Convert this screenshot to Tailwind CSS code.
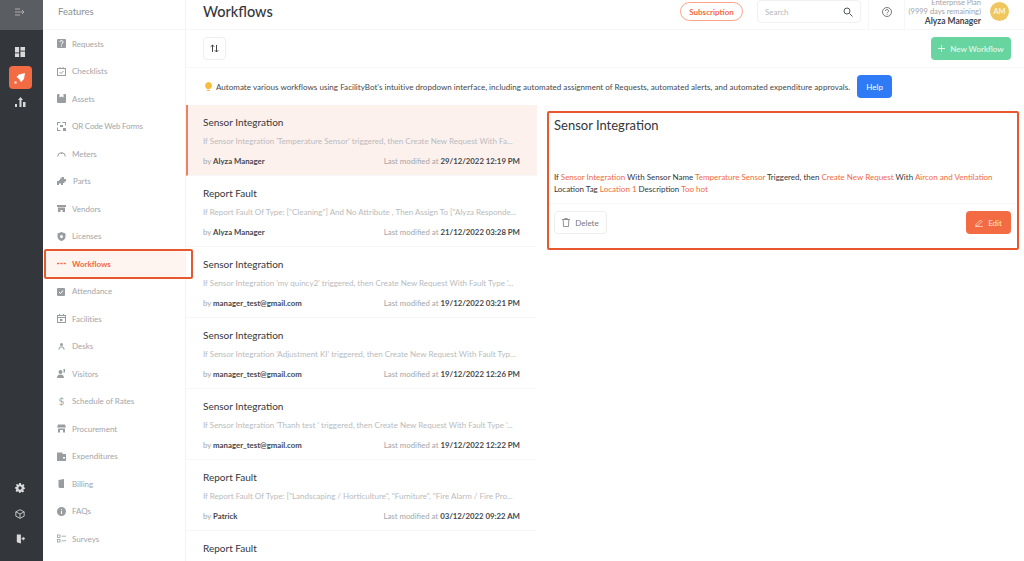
<!doctype html>
<html><head><meta charset="utf-8"><script src="https://cdn.jsdelivr.net/npm/@tailwindcss/browser@4"></script></head>
<body class="m-0">
<div class="relative flex w-[1024px] h-[561px] overflow-hidden bg-white font-['Lato','Noto_Sans',sans-serif] text-[#33373c]">
  <aside class="w-[43px] shrink-0 bg-[#33373c] flex flex-col items-center text-[#d9dadb]">
    <div class="w-full h-[30px] bg-[#5a5d61] flex items-center justify-center pb-[6px] pr-[3px]">
      <svg width="10" height="8" viewBox="0 0 10 8" fill="none" stroke="#a9abad" stroke-width="1"><path d="M0 1h5M0 4h8M0 7h5M7 2l2 2-2 2"/></svg>
    </div>
    <div class="mt-[11px] mr-[3px] h-[22px] flex items-center"><svg width="10" height="10" viewBox="0 0 11 11" fill="#d9dadb"><rect width="4.500" height="6"/><rect x="6" width="5" height="4"/><rect y="7" width="4.500" height="4"/><rect x="6" y="5" width="5" height="6"/></svg></div>
    <div class="mt-[3px] mr-[3px] w-[23px] h-[23px] rounded-[4px] bg-[#f26b43] flex items-center justify-center"><svg width="12" height="12" viewBox="0 0 12 12" fill="white"><path d="M11 1 10 7 7 10 5 7 2.500 5 5 2.500Z"/><rect x="0.500" y="9.500" width="2" height="2"/></svg></div>
    <div class="mt-[5px] mr-[3px] h-[16px] flex items-center"><svg width="11" height="10" viewBox="0 0 11 10" fill="#d9dadb"><path d="M5.500 0 8 3H6.500v7h-2V3H3Z"/><rect y="7" width="2" height="3"/><rect x="8" y="5" width="2.500" height="5"/></svg></div>
    <div class="mt-auto mb-[17px] mr-[3px] flex flex-col items-center gap-[15.500px]">
      <svg width="10" height="10" viewBox="0 0 24 24" fill="#d9dadb"><path fill-rule="evenodd" d="M10 0h4l.7 3.500 2.300 1 3-2 2.800 2.800-2 3 1 2.300L24 11v3l-3.200.7-1 2.300 2 3-2.800 2.800-3-2-2.300 1L13 24h-3l-.7-3.200-2.300-1-3 2L1.200 19l2-3-1-2.300L0 13v-3l3.200-.7 1-2.300-2-3L5 2.200l3 2 1.300-.7ZM12 8a4 4 0 1 0 0 8 4 4 0 0 0 0-8Z"/></svg>
      <svg width="10" height="10" viewBox="0 0 12 12" fill="none" stroke="#d9dadb" stroke-width="1"><path d="M6 .8 11 3.400V8.600L6 11.200 1 8.600V3.400ZM1 3.400 6 6l5-2.600M6 6v5.200"/></svg>
      <svg width="9" height="10" viewBox="0 0 11 11" fill="#d9dadb"><path d="M1 0h5v11L1 9.500Z"/><path d="M7 4h2V2.500L11 5 9 7.500V6H7Z"/></svg>
    </div>
  </aside>

  <nav class="w-[143px] shrink-0 border-r border-[#f3f3f3] flex flex-col">
    <div class="h-[30px] pl-[15px] pb-[5px] flex items-center text-[9.500px] text-[#8c8f92] border-b border-[#f7f7f7]">Features</div>
    <ul class="flex flex-col text-[8px] text-[#a3a5a8] tracking-[-.02px]">
      <li class="h-[27.500px] flex items-center gap-[6px] pl-[14px]"><svg class="w-[9px] h-[9px] shrink-0" viewBox="0 0 9 9"><rect width="9" height="9" rx="1" fill="#9a9da0"/><path d="M3 3.200a1.500 1.500 0 1 1 2 1.300c-.4.200-.5.400-.5.900M4.500 6.500v1" stroke="#fff" fill="none"/></svg>Requests</li>
      <li class="h-[27.500px] flex items-center gap-[6px] pl-[14px]"><svg class="w-[9px] h-[9px] shrink-0" viewBox="0 0 9 9" fill="none" stroke="#9a9da0"><rect x=".5" y="1.500" width="8" height="7"/><path d="M3 0v2M6 0v2M2.500 5l1.500 1.500L6.500 4"/></svg>Checklists</li>
      <li class="h-[27.500px] flex items-center gap-[6px] pl-[14px]"><svg class="w-[9px] h-[9px] shrink-0" viewBox="0 0 9 9" fill="#9a9da0"><path d="M0 1a1 1 0 0 1 1-1h1.500v3.500L4.500 2.500l2 1V0H8a1 1 0 0 1 1 1v7a1 1 0 0 1-1 1H1a1 1 0 0 1-1-1Z"/></svg>Assets</li>
      <li class="h-[27.500px] flex items-center gap-[6px] pl-[14px] whitespace-nowrap"><svg class="w-[9px] h-[9px] shrink-0" viewBox="0 0 9 9" fill="#9a9da0"><path d="M0 0h3.500v1H1v2.500H0ZM5.500 0H9v3.500H8V1H5.500ZM0 5.500h1V8h2.500v1H0ZM6 6h3v3H6ZM3 3h3v2H3Z"/></svg><span class="tracking-[-.2px]">QR Code Web Forms</span></li>
      <li class="h-[27.500px] flex items-center gap-[6px] pl-[14px]"><svg class="w-[9px] h-[9px] shrink-0" viewBox="0 0 9 9" fill="none" stroke="#9a9da0"><path d="M.7 7.500a3.800 3.800 0 0 1 7.600 0M4.500 5 5 3.500"/></svg>Meters</li>
      <li class="h-[27.500px] flex items-center gap-[7px] pl-[14px]"><svg class="w-[9px] h-[9px] shrink-0" viewBox="0 0 9 9" fill="#9a9da0"><path d="M3 1.500h1.500V0H7v2h2v2.500H7.500V6H6v2H4V6.500H2V8H0V4h2V3H3Z"/></svg>Parts</li>
      <li class="h-[27.500px] flex items-center gap-[6px] pl-[14px]"><svg class="w-[9px] h-[9px] shrink-0" viewBox="0 0 9 9" fill="#9a9da0"><path d="M0 1h9v2H0ZM1 3.500h7V8H5.500V6h-2v2H1Z"/></svg>Vendors</li>
      <li class="h-[27.500px] flex items-center gap-[6px] pl-[14px]"><svg class="w-[9px] h-[9px] shrink-0" viewBox="0 0 9 9" fill="#9a9da0"><path fill-rule="evenodd" d="M4.500 0 8.500 1.500V4.500C8.500 7 6.500 8.500 4.500 9 2.500 8.500.5 7 .5 4.500V1.500ZM4.500 3a1.500 1.500 0 1 0 0 3 1.500 1.500 0 0 0 0-3Z"/></svg>Licenses</li>
      <li class="h-[27.500px] flex items-center gap-[6px] pl-[14px] bg-[#fef5f1] text-[#f26b43] font-bold"><svg class="w-[9px] h-[9px] shrink-0" viewBox="0 0 9 9" fill="#f26b43"><rect x="0" y="3.800" width="2.200" height="1.400"/><rect x="3.300" y="3.800" width="2.200" height="1.400"/><rect x="6.600" y="3.800" width="2.200" height="1.400"/></svg>Workflows</li>
      <li class="h-[27.500px] flex items-center gap-[6px] pl-[14px]"><svg class="w-[9px] h-[9px] shrink-0" viewBox="0 0 9 9"><rect y="1" width="8" height="8" rx="1" fill="#9a9da0"/><path d="M2 5l1.500 1.500L6 3.500" stroke="#fff" fill="none"/></svg>Attendance</li>
      <li class="h-[27.500px] flex items-center gap-[6px] pl-[14px]"><svg class="w-[9px] h-[9px] shrink-0" viewBox="0 0 9 9" fill="none" stroke="#9a9da0"><rect x=".5" y="1.500" width="8" height="7"/><path d="M0 3.500h9M2.500 0v2M6.500 0v2M3.500 5l2 1-2 1Z"/></svg>Facilities</li>
      <li class="h-[27.500px] flex items-center gap-[6px] pl-[14px]"><svg class="w-[9px] h-[9px] shrink-0" viewBox="0 0 9 9" fill="#9a9da0"><circle cx="4.500" cy="2.500" r="1.500"/><path d="M1 7.500 3 4.500h3l2 3H6.800L5.500 5.500h-2L2.200 7.500Z"/></svg>Desks</li>
      <li class="h-[27.500px] flex items-center gap-[6px] pl-[14px]"><svg class="w-[9px] h-[9px] shrink-0" viewBox="0 0 9 9" fill="#9a9da0"><circle cx="3.500" cy="3" r="2"/><path d="M0 9c0-2.500 1.500-3.500 3.500-3.500S7 6.500 7 9ZM6.500 0h1.500v3.500H6.500Z"/></svg>Visitors</li>
      <li class="h-[27.500px] flex items-center gap-[6px] pl-[14px]"><span class="w-[9px] shrink-0 text-center text-[10px] leading-none">$</span>Schedule of Rates</li>
      <li class="h-[27.500px] flex items-center gap-[6px] pl-[14px]"><svg class="w-[9px] h-[9px] shrink-0" viewBox="0 0 9 9" fill="#9a9da0"><path d="M1 .5h7l1 3H0ZM1 4.500h7V8.500H6V6H3v2.500H1Z"/></svg>Procurement</li>
      <li class="h-[27.500px] flex items-center gap-[6px] pl-[14px]"><svg class="w-[9px] h-[9px] shrink-0" viewBox="0 0 9 9" fill="#9a9da0"><path fill-rule="evenodd" d="M0 .5h5.500v1.500H9v7H0ZM6 5h2v1.500H6Z"/></svg>Expenditures</li>
      <li class="h-[27.500px] flex items-center gap-[6px] pl-[14px]"><svg class="w-[9px] h-[9px] shrink-0" viewBox="0 0 9 9" fill="#9a9da0"><path d="M1.500 1 7 0v9H2.500L1.500 8Z"/></svg>Billing</li>
      <li class="h-[27.500px] flex items-center gap-[6px] pl-[14px]"><svg class="w-[9px] h-[9px] shrink-0" viewBox="0 0 9 9"><circle cx="4.500" cy="4.500" r="4.500" fill="#9a9da0"/><path d="M4.500 2v.8M4.500 3.800V7" stroke="#fff"/></svg>FAQs</li>
      <li class="h-[27.500px] flex items-center gap-[6px] pl-[14px]"><svg class="w-[9px] h-[9px] shrink-0" viewBox="0 0 9 9" fill="none" stroke="#9a9da0" stroke-width=".8"><rect x=".5" y="1" width="2.500" height="2.500"/><rect x=".5" y="5.500" width="2.500" height="2.500"/><path d="M4.500 2.200H9M4.500 6.800H9"/></svg>Surveys</li>
    </ul>
  </nav>

  <main class="flex-1 min-w-0 flex flex-col">
    <header class="h-[30px] shrink-0 flex items-center border-b border-[#f7f7f7] pb-[6px]">
      <h1 class="ml-[17px] text-[14.500px] font-medium text-[#33373c]">Workflows</h1>
      <div class="ml-auto w-[63px] h-[19px] rounded-full border border-[#f9a48b] flex items-center justify-center text-[8px] font-bold text-[#f26b43]">Subscription</div>
      <div class="ml-[14px] w-[104px] h-[23px] rounded-[4px] border border-[#f0f0f0] flex items-center justify-between px-[7px] text-[8px] text-[#b5b7b9]">Search<svg width="10" height="10" viewBox="0 0 10 10" fill="none" stroke="#55585c" stroke-width="1"><circle cx="4" cy="4" r="3"/><path d="M6.500 6.500 9.500 9.500"/></svg></div>
      <div class="ml-[7px] w-[37px] h-[30px] self-start pb-[6px] border-x border-[#f7f7f7] flex items-center justify-center"><svg width="10" height="10" viewBox="0 0 10 10" fill="none" stroke="#55585c" stroke-width=".8"><circle cx="5" cy="5" r="4.500"/><path d="M3.500 4a1.500 1.500 0 1 1 2.200 1.300C5.200 5.600 5 5.800 5 6.300M5 7v.8"/></svg></div>
      <div class="w-[76px] self-start flex flex-col items-end whitespace-nowrap text-[7.500px] text-[#a3a5a8]"><span class="leading-[5px]">Enterprise Plan</span><span class="mt-[1.500px] leading-[9px]">(9999 days remaining)</span><span class="text-[8.500px] leading-[11px] font-bold text-[#44474b]">Alyza Manager</span></div>
      <div class="ml-[9px] mr-[15px] w-[19px] h-[19px] rounded-full bg-[#f0c75e] flex items-center justify-center text-[7.500px] text-white">AM</div>
    </header>
    <div class="h-[38px] shrink-0 flex items-center justify-between pl-[17px] pr-[13px] border-b border-[#f7f7f7]">
      <div class="w-[23px] h-[23px] rounded-[4px] border border-[#eeeeee] flex items-center justify-center"><svg width="9" height="9" viewBox="0 0 9 9" fill="none" stroke="#44474b" stroke-width="1"><path d="M2.500 8V1M.7 2.800 2.500 1l1.800 1.800M6.500 1v7M4.700 6.200 6.500 8l1.800-1.800"/></svg></div>
      <div class="w-[80px] h-[23px] rounded-[4px] bg-[#68d5a0] flex items-center justify-center gap-[5px] text-[8px] font-medium text-[#e6f8ef]"><svg width="7" height="7" viewBox="0 0 7 7" stroke="#e6f8ef"><path d="M3.500 0v7M0 3.500h7"/></svg>New Workflow</div>
    </div>
    <div class="h-[37px] shrink-0 flex items-center pl-[19px] text-[8px] text-[#44474b]">
      <svg class="shrink-0" width="7" height="9" viewBox="0 0 7 9" fill="#f6bc3d"><path d="M3.500 0a3.500 3.500 0 0 1 2 6.300V7h-4v-.7a3.500 3.500 0 0 1 2-6.300ZM2 7.700h3V9H2Z"/></svg>
      <span class="ml-[4px] tracking-[.035px] whitespace-nowrap">Automate various workflows using FacilityBot's intuitive dropdown interface, including automated assignment of Requests, automated alerts, and automated expenditure approvals.</span>
      <div class="ml-[7px] w-[35px] h-[23px] rounded-[4px] bg-[#2f7bf5] flex items-center justify-center text-white">Help</div>
    </div>
    <div class="flex-1 min-h-0 flex">
      <div class="w-[351px] shrink-0 flex flex-col overflow-hidden">
        <article class="h-[71px] shrink-0 border-l-2 border-[#ee8163] bg-[#fdf1ee] pl-[15px] pr-[17px] pt-[10px] border-b border-b-[#f7f7f7]">
          <h2 class="text-[10px] leading-[14px] text-[#33373c]">Sensor Integration</h2>
          <p class="mt-[7px] text-[8px] leading-[10px] text-[#b9bbbd] truncate">If Sensor Integration 'Temperature Sensor' triggered, then Create New Request With Fa...</p>
          <div class="mt-[10px] flex justify-between text-[7.800px] leading-[10px] text-[#a3a5a8]"><span>by <b class="font-bold text-[#44474b]">Alyza Manager</b></span><span>Last modified at <b class="font-bold text-[#44474b]">29/12/2022 12:19 PM</b></span></div>
        </article>
        <article class="h-[71px] shrink-0 pl-[17px] pr-[17px] pt-[10px] border-b border-[#f7f7f7]">
          <h2 class="text-[10px] leading-[14px] text-[#33373c]">Report Fault</h2>
          <p class="mt-[7px] text-[8px] leading-[10px] text-[#b9bbbd] truncate">If Report Fault Of Type: ["Cleaning"] And No Attribute , Then Assign To ["Alyza Responde...</p>
          <div class="mt-[10px] flex justify-between text-[7.800px] leading-[10px] text-[#a3a5a8]"><span>by <b class="font-bold text-[#44474b]">Alyza Manager</b></span><span>Last modified at <b class="font-bold text-[#44474b]">21/12/2022 03:28 PM</b></span></div>
        </article>
        <article class="h-[71px] shrink-0 pl-[17px] pr-[17px] pt-[10px] border-b border-[#f7f7f7]">
          <h2 class="text-[10px] leading-[14px] text-[#33373c]">Sensor Integration</h2>
          <p class="mt-[7px] text-[8px] leading-[10px] text-[#b9bbbd] truncate">If Sensor Integration 'my quincy2' triggered, then Create New Request With Fault Type '...</p>
          <div class="mt-[10px] flex justify-between text-[7.800px] leading-[10px] text-[#a3a5a8]"><span>by <b class="font-bold text-[#44474b]">manager_test@gmail.com</b></span><span>Last modified at <b class="font-bold text-[#44474b]">19/12/2022 03:21 PM</b></span></div>
        </article>
        <article class="h-[71px] shrink-0 pl-[17px] pr-[17px] pt-[10px] border-b border-[#f7f7f7]">
          <h2 class="text-[10px] leading-[14px] text-[#33373c]">Sensor Integration</h2>
          <p class="mt-[7px] text-[8px] leading-[10px] text-[#b9bbbd] truncate">If Sensor Integration 'Adjustment KI' triggered, then Create New Request With Fault Typ...</p>
          <div class="mt-[10px] flex justify-between text-[7.800px] leading-[10px] text-[#a3a5a8]"><span>by <b class="font-bold text-[#44474b]">manager_test@gmail.com</b></span><span>Last modified at <b class="font-bold text-[#44474b]">19/12/2022 12:26 PM</b></span></div>
        </article>
        <article class="h-[71px] shrink-0 pl-[17px] pr-[17px] pt-[10px] border-b border-[#f7f7f7]">
          <h2 class="text-[10px] leading-[14px] text-[#33373c]">Sensor Integration</h2>
          <p class="mt-[7px] text-[8px] leading-[10px] text-[#b9bbbd] truncate">If Sensor Integration 'Thanh test ' triggered, then Create New Request With Fault Type '...</p>
          <div class="mt-[10px] flex justify-between text-[7.800px] leading-[10px] text-[#a3a5a8]"><span>by <b class="font-bold text-[#44474b]">manager_test@gmail.com</b></span><span>Last modified at <b class="font-bold text-[#44474b]">19/12/2022 12:22 PM</b></span></div>
        </article>
        <article class="h-[71px] shrink-0 pl-[17px] pr-[17px] pt-[10px] border-b border-[#f7f7f7]">
          <h2 class="text-[10px] leading-[14px] text-[#33373c]">Report Fault</h2>
          <p class="mt-[7px] text-[8px] leading-[10px] text-[#b9bbbd] truncate">If Report Fault Of Type: ["Landscaping / Horticulture", "Furniture", "Fire Alarm / Fire Pro...</p>
          <div class="mt-[10px] flex justify-between text-[7.800px] leading-[10px] text-[#a3a5a8]"><span>by <b class="font-bold text-[#44474b]">Patrick</b></span><span>Last modified at <b class="font-bold text-[#44474b]">03/12/2022 09:22 AM</b></span></div>
        </article>
        <article class="h-[71px] shrink-0 pl-[17px] pr-[17px] pt-[10px]">
          <h2 class="text-[10px] leading-[14px] text-[#33373c]">Report Fault</h2>
        </article>
      </div>
      <section class="flex-1 min-w-0 pl-[17px] pr-[13px] pt-[12px]">
        <h2 class="text-[13px] leading-[16px] text-[#33373c]">Sensor Integration</h2>
        <p class="mt-[38px] text-[8px] leading-[12px] text-[#33373c] whitespace-nowrap">If <span class="text-[#f26b43]">Sensor Integration</span> With Sensor Name <span class="text-[#f26b43]">Temperature Sensor</span> Triggered, then <span class="text-[#f26b43]">Create New Request</span> With <span class="text-[#f26b43]">Aircon and Ventilation</span><br>Location Tag <span class="text-[#f26b43]">Location 1</span> Description <span class="text-[#f26b43]">Too hot</span></p>
        <div class="mt-[8px] -mx-[5px] px-[5px] pt-[7px] border-t border-[#f7f7f7] flex justify-between">
          <div class="w-[53px] h-[23px] rounded-[4px] border border-[#eeeeee] flex items-center justify-center gap-[5px] text-[8px] text-[#77797c]"><svg width="8" height="9" viewBox="0 0 8 9" fill="none" stroke="#77797c" stroke-width=".8"><path d="M0 1.500h8M1.200 1.500l.3 7h5l.3-7M2.700 1.500V.4h2.600v1.100"/></svg>Delete</div>
          <div class="w-[45px] h-[23px] rounded-[4px] bg-[#f26b43] flex items-center justify-center gap-[5px] text-[8px] text-[#fde5dc]"><svg width="8" height="8" viewBox="0 0 8 8" fill="none" stroke="#fde5dc" stroke-width=".8"><path d="M1 5.500 5.500 1 7 2.500 2.500 7H1ZM0 7.700h8"/></svg>Edit</div>
        </div>
      </section>
    </div>
  </main>

  <div class="absolute left-[44px] top-[249px] w-[149px] h-[29.500px] rounded-[2px] border-2 border-[#e9572f]"></div>
  <div class="absolute left-[547px] top-[111px] w-[472px] h-[138.500px] rounded-[2px] border-2 border-[#e9572f]"></div>
</div>
</body></html>
